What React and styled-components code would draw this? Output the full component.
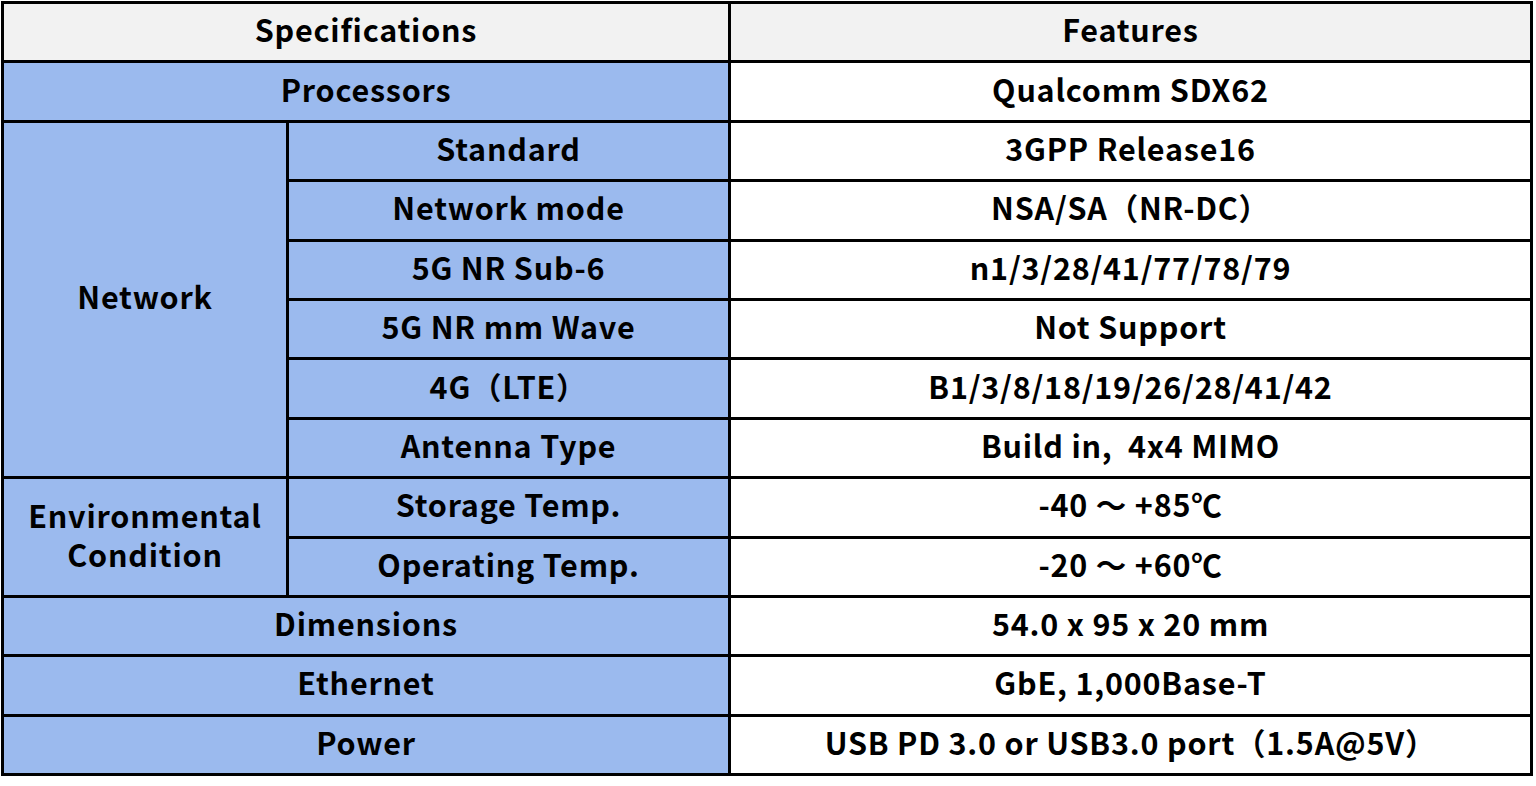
import React from 'react';
import styled, { createGlobalStyle } from 'styled-components';

const GlobalStyle = createGlobalStyle`
  html, body {
    margin: 0;
    padding: 0;
    background: #fff;
  }
  body {
    font-family: "Noto Sans CJK JP", "Noto Sans", sans-serif;
    color: #000;
  }
`;

const BLUE = '#9bbaee';

const Page = styled.div`
  padding: 1px 0 0 1px;
`;

const Grid = styled.div`
  display: grid;
  width: 1532px;
  grid-template-columns: 282px 439px 799px;
  grid-auto-rows: 56.4px;
  gap: 3px;
  padding: 3px;
  box-sizing: border-box;
  background: #000;
`;

const Cell = styled.div`
  grid-column: ${(p) => p.$col || 'auto'};
  grid-row: ${(p) => p.$row || 'auto'};
  background: ${(p) => p.$bg || '#fff'};
  display: flex;
  align-items: center;
  justify-content: center;
  padding-bottom: 5px;
  box-sizing: border-box;
  text-align: center;
  font-size: 30.5px;
  font-weight: 700;
  line-height: 39px;
  letter-spacing: 0.8px;
  white-space: pre;
`;

const rows = [
  { label: 'Processors', value: 'Qualcomm SDX62' },
  {
    group: 'Network',
    items: [
      ['Standard', '3GPP Release16'],
      ['Network mode', 'NSA/SA（NR-DC）'],
      ['5G NR Sub-6', 'n1/3/28/41/77/78/79'],
      ['5G NR mm Wave', 'Not Support'],
      ['4G（LTE）', 'B1/3/8/18/19/26/28/41/42'],
      ['Antenna Type', 'Build in,  4x4 MIMO'],
    ],
  },
  {
    group: 'Environmental\nCondition',
    items: [
      ['Storage Temp.', '-40 ～ +85℃'],
      ['Operating Temp.', '-20 ～ +60℃'],
    ],
  },
  { label: 'Dimensions', value: '54.0 x 95 x 20 mm' },
  { label: 'Ethernet', value: 'GbE, 1,000Base-T' },
  { label: 'Power', value: 'USB PD 3.0 or USB3.0 port（1.5A@5V）' },
];

export default function App() {
  return (
    <Page>
      <GlobalStyle />
      <Grid>
        <Cell $col="1 / 3" $bg="#f2f2f2">Specifications</Cell>
        <Cell $bg="#f2f2f2">Features</Cell>
        {rows.map((r) =>
          r.group ? (
            <React.Fragment key={r.group}>
              <Cell $col="1" $row={`span ${r.items.length}`} $bg={BLUE}>
                {r.group}
              </Cell>
              {r.items.map(([k, v]) => (
                <React.Fragment key={k}>
                  <Cell $col="2" $bg={BLUE}>{k}</Cell>
                  <Cell $col="3">{v}</Cell>
                </React.Fragment>
              ))}
            </React.Fragment>
          ) : (
            <React.Fragment key={r.label}>
              <Cell $col="1 / 3" $bg={BLUE}>{r.label}</Cell>
              <Cell $col="3">{r.value}</Cell>
            </React.Fragment>
          )
        )}
      </Grid>
    </Page>
  );
}
